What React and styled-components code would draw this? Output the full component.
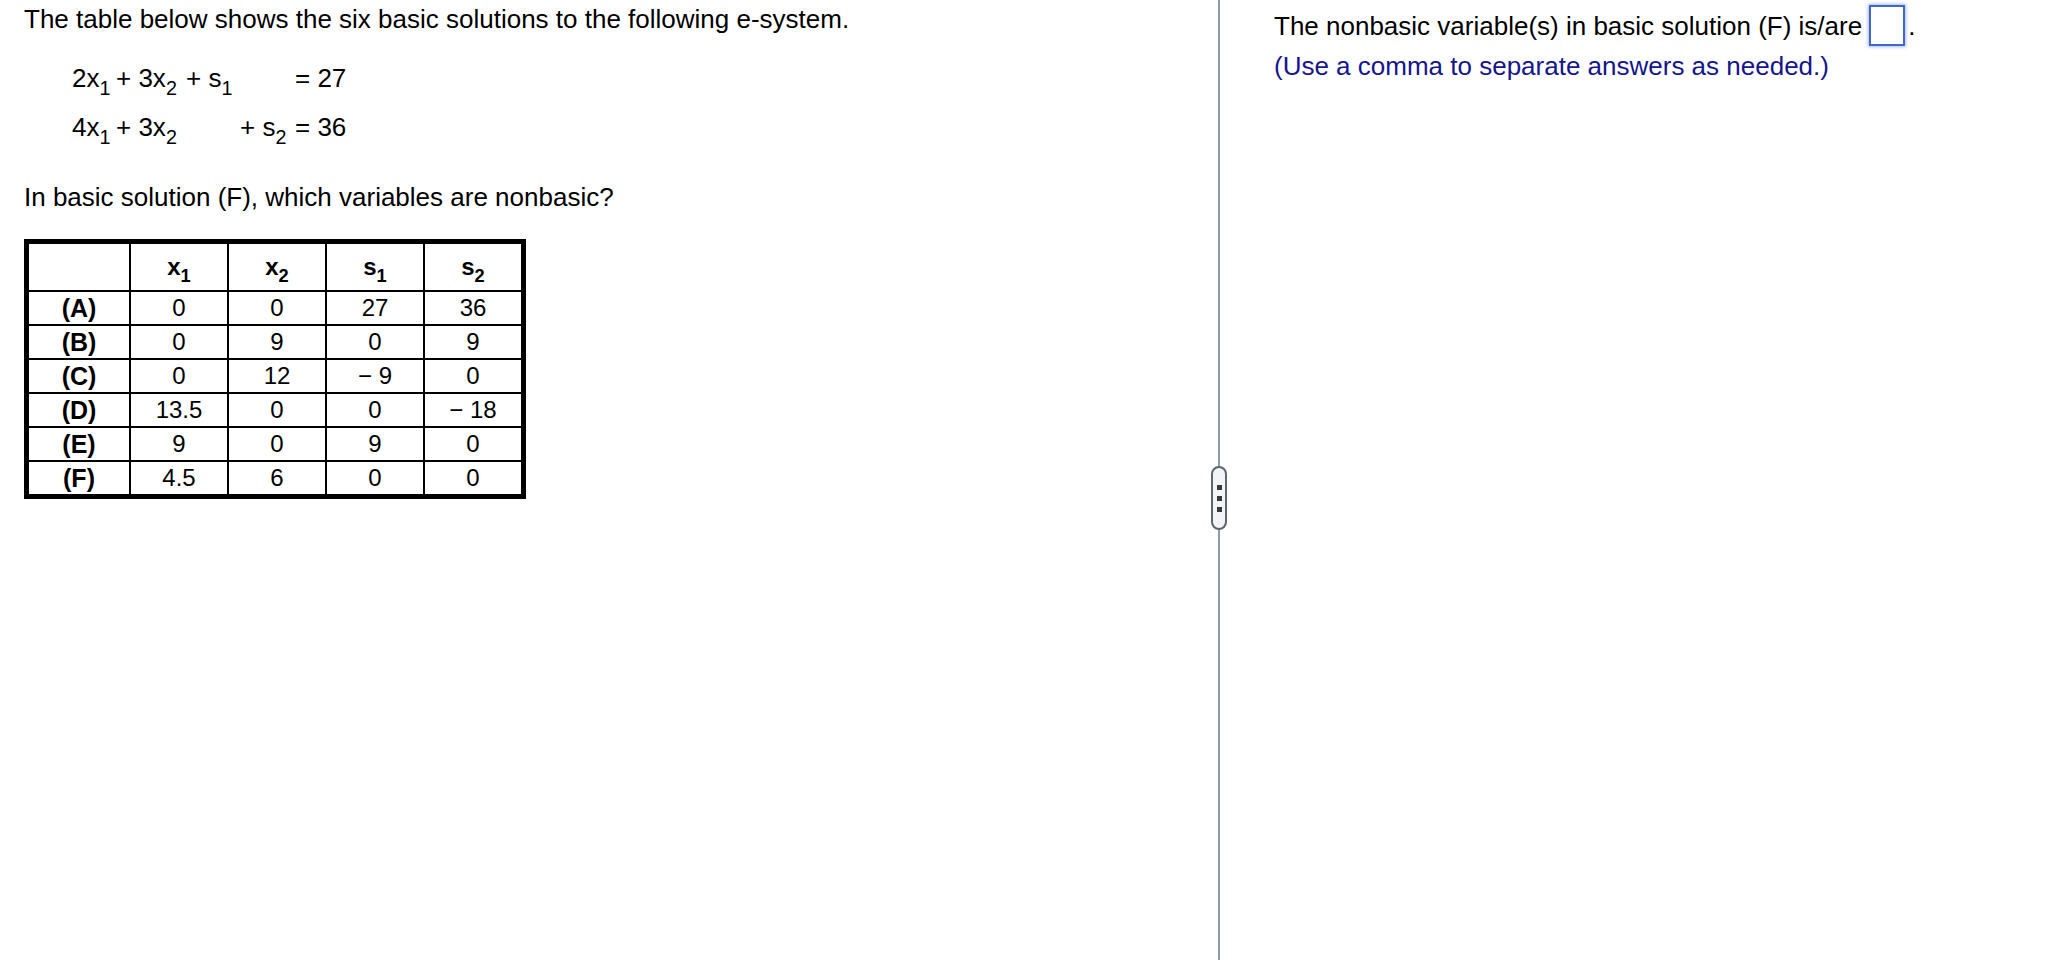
import React from "react";
import styled, { createGlobalStyle } from "styled-components";

const GlobalStyle = createGlobalStyle`
  html, body, #root {
    height: 100%;
  }
  body {
    margin: 0;
    background: #fff;
    color: #000;
    font-family: "Liberation Sans", Arial, sans-serif;
  }
`;

const rows = [
  ["(A)", "0", "0", "27", "36"],
  ["(B)", "0", "9", "0", "9"],
  ["(C)", "0", "12", "\u2212 9", "0"],
  ["(D)", "13.5", "0", "0", "\u2212 18"],
  ["(E)", "9", "0", "9", "0"],
  ["(F)", "4.5", "6", "0", "0"],
];

const App = () => {
  return (
    <Page>
      <GlobalStyle />
      <LeftPane>
        <Text>The table below shows the six basic solutions to the following e-system.</Text>
        <Equations>
          {/* row 1 */}
          <Term>
            2x<Sub>1</Sub>
          </Term>
          <Term>
            + 3x<Sub>2</Sub>
          </Term>
          <Term>
            + s<Sub>1</Sub>
          </Term>
          <Term />
          <Term>= 27</Term>
          {/* row 2 */}
          <Term>
            4x<Sub>1</Sub>
          </Term>
          <Term>
            + 3x<Sub>2</Sub>
          </Term>
          <Term />
          <Term>
            + s<Sub>2</Sub>
          </Term>
          <Term>= 36</Term>
        </Equations>
        <Question>In basic solution (F), which variables are nonbasic?</Question>
        <Table>
          <thead>
            <tr>
              <Head />
              <Head>
                x<Sub>1</Sub>
              </Head>
              <Head>
                x<Sub>2</Sub>
              </Head>
              <Head>
                s<Sub>1</Sub>
              </Head>
              <Head>
                s<Sub>2</Sub>
              </Head>
            </tr>
          </thead>
          <tbody>
            {rows.map((r) => (
              <tr key={r[0]}>
                <Label>{r[0]}</Label>
                {r.slice(1).map((v, i) => (
                  <Cell key={i}>{v}</Cell>
                ))}
              </tr>
            ))}
          </tbody>
        </Table>
      </LeftPane>

      <Divider>
        <Handle>
          <Dot />
          <Dot />
          <Dot />
        </Handle>
      </Divider>

      <RightPane>
        <AnswerLine>
          The nonbasic variable(s) in basic solution (F) is/are
          <AnswerBox />.
        </AnswerLine>
        <Hint>(Use a comma to separate answers as needed.)</Hint>
      </RightPane>
    </Page>
  );
};

const Page = styled.div`
  display: flex;
  height: 100%;
  font-size: 26px;
`;

const LeftPane = styled.section`
  width: 1218px;
  flex-shrink: 0;
  padding: 4px 0 0 24px;
  box-sizing: border-box;
`;

const Text = styled.div`
  line-height: 30px;
`;

const Equations = styled.div`
  display: grid;
  grid-template-columns: 44px 70px 54px 55px auto;
  grid-auto-rows: 49px;
  align-items: end;
  margin: 10px 0 0 48px;
  line-height: 30px;
  white-space: nowrap;
`;

const Term = styled.span``;

const Sub = styled.sub`
  font-size: 0.76em;
  vertical-align: -0.38em;
  line-height: 0;
`;

const Question = styled.div`
  margin-top: 40px;
  line-height: 30px;
`;

const Table = styled.table`
  margin-top: 27px;
  border-collapse: collapse;
  border: 5px solid #000;
  font-size: 24px;
  text-align: center;
`;

const Head = styled.th`
  width: 96px;
  height: 46px;
  padding: 0;
  border: 2px solid #000;
  font-weight: bold;
  line-height: 26px;
  &:first-child {
    width: 100px;
  }
`;

const Label = styled.td`
  height: 32px;
  padding: 0;
  border: 2px solid #000;
  font-weight: bold;
  font-size: 25px;
  line-height: 26px;
`;

const Cell = styled.td`
  height: 32px;
  padding: 0;
  border: 2px solid #000;
  line-height: 26px;
`;

const Divider = styled.div`
  position: relative;
  width: 2px;
  flex-shrink: 0;
  background: #8a99ab;
`;

const Handle = styled.div`
  position: absolute;
  top: 466px;
  left: -7px;
  width: 12px;
  height: 60px;
  border: 2px solid #5c6670;
  border-radius: 8px;
  background: #f2f4f6;
  display: flex;
  flex-direction: column;
  align-items: center;
  justify-content: center;
  gap: 6px;
`;

const Dot = styled.span`
  width: 5px;
  height: 5px;
  background: #3a3a3a;
`;

const RightPane = styled.section`
  flex: 1;
  padding: 5px 0 0 54px;
`;

const AnswerLine = styled.div`
  display: flex;
  align-items: center;
  line-height: 30px;
  white-space: nowrap;
`;

const AnswerBox = styled.span`
  display: inline-block;
  width: 32px;
  height: 37px;
  margin: 0 3px 0 7px;
  border: 2px solid #3f66cc;
  box-shadow: 0 0 3px 1px rgba(63, 102, 204, 0.45);
  background: #fff;
`;

const Hint = styled.div`
  margin-top: 5px;
  line-height: 30px;
  color: #15158c;
`;

export default App;
